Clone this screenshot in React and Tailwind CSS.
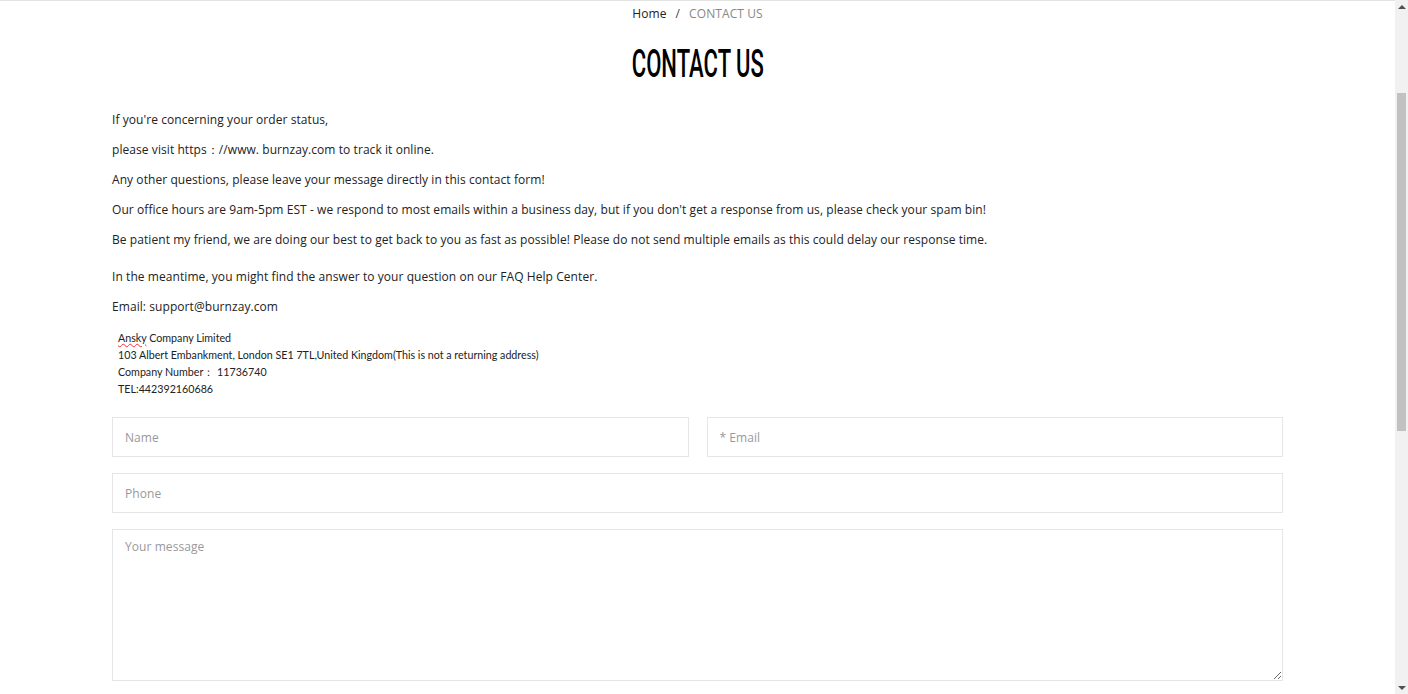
import React from 'react';

const body = { fontFamily: '"Open Sans", "Noto Sans", sans-serif' };

const lines = [
  "If you're concerning your order status,",
  'please visit https：//www. burnzay.com to track it online.',
  'Any other questions, please leave your message directly in this contact form!',
  "Our office hours are 9am-5pm EST - we respond to most emails within a business day, but if you don't get a response from us, please check your spam bin!",
  'Be patient my friend, we are doing our best to get back to you as fast as possible! Please do not send multiple emails as this could delay our response time.',
];

const field = 'h-[40px] border border-[#e6e6e6] px-[12px] text-[12px] placeholder:text-[#999] outline-none';

const App = () => {
  return (
    <div className="flex w-[1408px] h-[694px] overflow-hidden bg-white" style={body}>
      <main className="flex-1 border-t border-[#e3e3e3]">
        <nav className="h-[24px] flex items-center justify-center text-[12px] tracking-[0.1px] pt-[1px]">
          <a className="text-[#222]">Home</a>
          <span className="mx-[9px] text-[#444]">/</span>
          <span className="text-[#888]">CONTACT US</span>
        </nav>

        <h1 className="mt-[19px] h-[40px] flex items-center justify-center text-black">
          <span
            className="block text-[38px] leading-[40px] font-medium scale-x-[0.58]"
            style={{ fontFamily: 'Roboto, sans-serif' }}
          >
            CONTACT US
          </span>
        </h1>

        <section className="mx-[112px] mt-[21px] text-[12px] tracking-[0.07px] text-[#222]">
          {lines.map((t) => (
            <p key={t} className="leading-[30px]">{t}</p>
          ))}
          <p className="leading-[30px] mt-[7px]">In the meantime, you might find the answer to your question on our FAQ Help Center.</p>
          <p className="leading-[30px]">Email: support@burnzay.com</p>

          <div
            className="mt-[7px] ml-[6px] text-[10.7px] leading-[17px] tracking-normal text-[#222]"
            style={{ fontFamily: 'Lato, "Liberation Sans", sans-serif' }}
          >
            <p>
              <span className="underline decoration-wavy decoration-red-500 decoration-1">Ansky</span> Company Limited
            </p>
            <p>103 Albert Embankment, London SE1 7TL,United Kingdom(This is not a returning address)</p>
            <p>Company Number： 11736740</p>
            <p>TEL:442392160686</p>
          </div>

          <form className="mt-[20px] flex flex-col gap-[16px] w-[1171px]">
            <div className="flex gap-[18px]">
              <input placeholder="Name" className={`flex-1 ${field}`} />
              <input placeholder="* Email" className={`flex-1 ${field}`} />
            </div>
            <input placeholder="Phone" className={field} />
            <textarea
              placeholder="Your message"
              className="h-[152px] border border-[#e6e6e6] px-[12px] py-[8px] text-[12px] placeholder:text-[#999] outline-none"
            />
          </form>
        </section>
      </main>

      <div className="w-[13px] bg-[#f1f1f1] flex flex-col items-center">
        <div className="h-[13px] flex items-center justify-center">
          <div className="w-0 h-0 border-l-[4px] border-r-[4px] border-b-[4px] border-l-transparent border-r-transparent border-b-[#505050]" />
        </div>
        <div className="mt-[80px] w-[9px] h-[338px] bg-[#c1c1c1]" />
        <div className="flex-1" />
        <div className="h-[13px] flex items-center justify-center">
          <div className="w-0 h-0 border-l-[4px] border-r-[4px] border-t-[4px] border-l-transparent border-r-transparent border-t-[#505050]" />
        </div>
      </div>
    </div>
  );
};

export default App;
